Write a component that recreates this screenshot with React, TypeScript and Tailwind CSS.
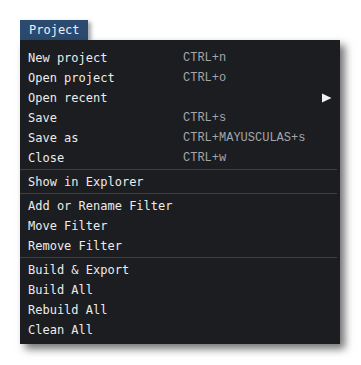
import React from "react";

type Item = { label: string; shortcut?: string; submenu?: boolean };

const groups: Item[][] = [
  [
    { label: "New project", shortcut: "CTRL+n" },
    { label: "Open project", shortcut: "CTRL+o" },
    { label: "Open recent", submenu: true },
    { label: "Save", shortcut: "CTRL+s" },
    { label: "Save as", shortcut: "CTRL+MAYUSCULAS+s" },
    { label: "Close", shortcut: "CTRL+w" },
  ],
  [{ label: "Show in Explorer" }],
  [
    { label: "Add or Rename Filter" },
    { label: "Move Filter" },
    { label: "Remove Filter" },
  ],
  [
    { label: "Build & Export" },
    { label: "Build All" },
    { label: "Rebuild All" },
    { label: "Clean All" },
  ],
];

export default function App() {
  return (
    <div className="w-[361px] h-[365px] bg-white pt-[20px] pl-[20px] font-['DejaVu_Sans_Mono',monospace]">
      <div className="w-[68px] h-[20px] bg-[#2a4a70] text-[#eef2f6] text-[12px] leading-[20px] pl-[9px] shadow-[3px_2px_4px_rgba(0,0,0,0.35)]">
        Project
      </div>
      <div className="w-[320px] bg-[#1b1d21] pt-[8px] pb-[4px] shadow-[5px_5px_8px_rgba(0,0,0,0.55)]">
        {groups.map((g, gi) => (
          <div key={gi}>
            {gi > 0 && (
              <div className="mt-[1px] mb-[2px] h-px w-[317px] bg-[#3b3e44]" />
            )}
            {g.map((it) => (
              <div
                key={it.label}
                className="relative flex h-[20px] items-center pl-[8px] text-[12px] leading-[20px]"
              >
                <span className="w-[155px] text-[#ececec]">{it.label}</span>
                {it.shortcut && (
                  <span className="text-[#a3a6aa] font-['Liberation_Mono',monospace]">
                    {it.shortcut}
                  </span>
                )}
                {it.submenu && (
                  <svg
                    className="absolute left-[302px] top-[5px]"
                    width="10"
                    height="10"
                    viewBox="0 0 10 10"
                  >
                    <polygon points="0,0.5 9.5,5 0,9.5" fill="#f2f2f2" />
                  </svg>
                )}
              </div>
            ))}
          </div>
        ))}
      </div>
    </div>
  );
}
